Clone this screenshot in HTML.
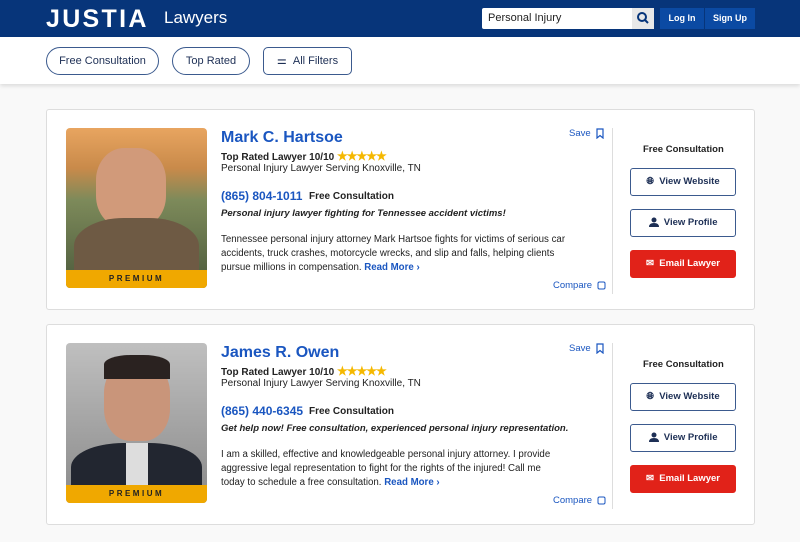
<!DOCTYPE html>
<html><head><meta charset="utf-8"><style>
*{margin:0;padding:0;box-sizing:border-box}
body{width:800px;height:542px;overflow:hidden;background:#f9f9f9;font-family:"Liberation Sans",sans-serif;color:#222;position:relative}
.hdr{position:absolute;left:0;top:0;width:800px;height:37px;background:#07357a}
.logo{position:absolute;left:46px;top:5px;color:#fff;font-weight:bold;font-size:25px;letter-spacing:2.3px}
.logo2{position:absolute;left:164px;top:8px;color:#fff;font-size:17px}
.search{position:absolute;left:482px;top:8px;width:172px;height:21px;background:#fff;border-radius:2px;font-size:11px;padding:4px 6px}
.sbtn{position:absolute;left:632px;top:8px;width:22px;height:21px;background:#e8e8e8}
.btn{position:absolute;top:8px;height:21px;background:#0b4aa3;color:#fff;font-size:9px;font-weight:bold;text-align:center;line-height:21px}
.bar{position:absolute;left:0;top:37px;width:800px;height:47px;background:#fff;box-shadow:0 2px 4px rgba(0,0,0,.12)}
.pill{position:absolute;top:47px;height:28px;border:1px solid #3b5a8e;border-radius:14px;font-size:11px;text-align:center;line-height:26px;color:#1d2f55;background:#fff}
.card{position:absolute;left:46px;width:709px;height:201px;background:#fff;border:1px solid #ddd;border-radius:3px}
.photo{position:absolute;left:19px;top:18px;width:141px;height:160px;border-radius:4px;overflow:hidden}
.prem{position:absolute;left:0;bottom:0;width:100%;height:18px;background:#f0a800;font-size:8px;font-weight:bold;letter-spacing:2.5px;text-align:center;line-height:18px;color:#222}
.name{position:absolute;left:174px;top:19px;font-size:16px;font-weight:bold;color:#1a56c0}
.tr{position:absolute;left:174px;top:40px;font-size:10px;font-weight:bold;line-height:12px;height:12px}
.tr span{color:#f5b800;font-size:12px;letter-spacing:-1px;line-height:12px}
.serv{position:absolute;left:174px;top:53px;font-size:10px}
.ph{position:absolute;left:174px;top:79px;font-size:12px;color:#1a56c0;font-weight:bold}
.fc{position:absolute;left:262px;top:81px;font-size:10px;font-weight:bold}
.tag{position:absolute;left:174px;top:98px;font-size:9.5px;font-weight:bold;font-style:italic}
.desc{position:absolute;left:174px;top:123px;width:350px;font-size:9.7px;line-height:14px}
.desc b{color:#1a56c0}
.save{position:absolute;left:522px;top:18px;font-size:9.5px;color:#1a56c0}
.cmp{position:absolute;left:506px;top:170px;font-size:9.5px;color:#1a56c0}
.vl{position:absolute;left:565px;top:18px;width:1px;height:166px;background:#ddd}
.rfc{position:absolute;left:596px;top:34px;font-size:9.5px;font-weight:bold}
.rb{position:absolute;left:583px;width:106px;height:28px;border:1px solid #3b5a8e;border-radius:3px;font-size:9.5px;font-weight:bold;color:#1d2f55;text-align:center;line-height:26px}
.rb.red{background:#e12219;border-color:#e12219;color:#fff}
svg{vertical-align:middle}
</style></head><body>
<div class="hdr"><div class="logo">JUSTIA</div><div class="logo2">Lawyers</div>
<div class="search">Personal Injury</div><div class="sbtn"><svg width="22" height="21"><circle cx="10" cy="9" r="4" stroke="#07357a" stroke-width="2" fill="none"/><line x1="13" y1="12" x2="16" y2="15" stroke="#07357a" stroke-width="2"/></svg></div>
<div class="btn" style="left:660px;width:44px">Log In</div><div class="btn" style="left:705px;width:50px">Sign Up</div></div>
<div class="bar"></div>
<div class="pill" style="left:46px;width:113px">Free Consultation</div>
<div class="pill" style="left:172px;width:78px">Top Rated</div>
<div class="pill" style="left:263px;width:89px;border-radius:5px">⚌ &nbsp;All Filters</div>

<div class="card" style="top:109px">
<div class="photo" style="background:linear-gradient(#e8a560 0%,#c98a4a 25%,#7d8a5a 45%,#4c5a3c 100%)"><div style="position:absolute;left:30px;top:20px;width:70px;height:80px;border-radius:40%;background:#d19a7a"></div><div style="position:absolute;left:8px;top:90px;width:125px;height:70px;border-radius:40% 40% 0 0;background:#6e5a44"></div><div class="prem">PREMIUM</div></div>
<div class="name">Mark C. Hartsoe</div>
<div class="tr">Top Rated Lawyer 10/10 <span>★★★★★</span></div>
<div class="serv">Personal Injury Lawyer Serving Knoxville, TN</div>
<div class="ph">(865) 804-1011</div><div class="fc">Free Consultation</div>
<div class="tag">Personal injury lawyer fighting for Tennessee accident victims!</div>
<div class="desc">Tennessee personal injury attorney Mark Hartsoe fights for victims of serious car accidents, truck crashes, motorcycle wrecks, and slip and falls, helping clients pursue millions in compensation. <b>Read More ›</b></div>
<div class="save">Save &nbsp;<svg width="8" height="11"><path d="M1 1h6v9L4 7.5 1 10z" fill="none" stroke="#1a56c0" stroke-width="1.2"/></svg></div>
<div class="cmp">Compare &nbsp;<svg width="9" height="9"><rect x="1" y="1" width="7" height="7" rx="1.5" fill="none" stroke="#1a56c0"/></svg></div>
<div class="vl"></div><div class="rfc">Free Consultation</div>
<div class="rb" style="top:58px">🌐︎ &nbsp;View Website</div>
<div class="rb" style="top:99px"><svg width="10" height="10"><circle cx="5" cy="3" r="2.5" fill="#1d2f55"/><path d="M0 10q0-4 5-4t5 4z" fill="#1d2f55"/></svg> &nbsp;View Profile</div>
<div class="rb red" style="top:140px">✉ &nbsp;Email Lawyer</div>
</div>

<div class="card" style="top:324px">
<div class="photo" style="background:linear-gradient(#bfbfbf,#8a8a8a)"><div style="position:absolute;left:38px;top:18px;width:66px;height:80px;border-radius:40%;background:#c9957a"></div><div style="position:absolute;left:38px;top:12px;width:66px;height:24px;border-radius:40% 40% 0 0;background:#2a2220"></div><div style="position:absolute;left:5px;top:100px;width:131px;height:60px;border-radius:40% 40% 0 0;background:#222630"></div><div style="position:absolute;left:60px;top:100px;width:22px;height:60px;background:#ddd"></div><div class="prem">PREMIUM</div></div>
<div class="name">James R. Owen</div>
<div class="tr">Top Rated Lawyer 10/10 <span>★★★★★</span></div>
<div class="serv">Personal Injury Lawyer Serving Knoxville, TN</div>
<div class="ph">(865) 440-6345</div><div class="fc">Free Consultation</div>
<div class="tag">Get help now! Free consultation, experienced personal injury representation.</div>
<div class="desc" style="width:335px">I am a skilled, effective and knowledgeable personal injury attorney. I provide aggressive legal representation to fight for the rights of the injured! Call me today to schedule a free consultation. <b>Read More ›</b></div>
<div class="save">Save &nbsp;<svg width="8" height="11"><path d="M1 1h6v9L4 7.5 1 10z" fill="none" stroke="#1a56c0" stroke-width="1.2"/></svg></div>
<div class="cmp">Compare &nbsp;<svg width="9" height="9"><rect x="1" y="1" width="7" height="7" rx="1.5" fill="none" stroke="#1a56c0"/></svg></div>
<div class="vl"></div><div class="rfc">Free Consultation</div>
<div class="rb" style="top:58px">🌐︎ &nbsp;View Website</div>
<div class="rb" style="top:99px"><svg width="10" height="10"><circle cx="5" cy="3" r="2.5" fill="#1d2f55"/><path d="M0 10q0-4 5-4t5 4z" fill="#1d2f55"/></svg> &nbsp;View Profile</div>
<div class="rb red" style="top:140px">✉ &nbsp;Email Lawyer</div>
</div>
</body></html>
